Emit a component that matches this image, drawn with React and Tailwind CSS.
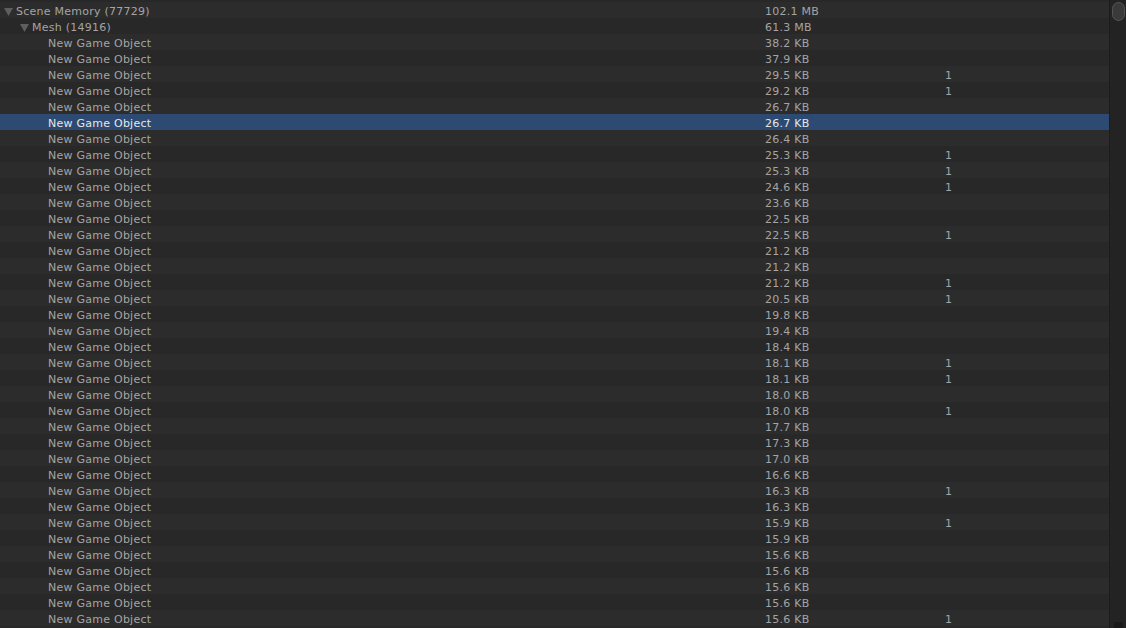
import React from "react";

const data = [
  ["38.2 KB", ""], ["37.9 KB", ""], ["29.5 KB", "1"], ["29.2 KB", "1"], ["26.7 KB", ""],
  ["26.7 KB", "", true], ["26.4 KB", ""], ["25.3 KB", "1"], ["25.3 KB", "1"], ["24.6 KB", "1"],
  ["23.6 KB", ""], ["22.5 KB", ""], ["22.5 KB", "1"], ["21.2 KB", ""], ["21.2 KB", ""],
  ["21.2 KB", "1"], ["20.5 KB", "1"], ["19.8 KB", ""], ["19.4 KB", ""], ["18.4 KB", ""],
  ["18.1 KB", "1"], ["18.1 KB", "1"], ["18.0 KB", ""], ["18.0 KB", "1"], ["17.7 KB", ""],
  ["17.3 KB", ""], ["17.0 KB", ""], ["16.6 KB", ""], ["16.3 KB", "1"], ["16.3 KB", ""],
  ["15.9 KB", "1"], ["15.9 KB", ""], ["15.6 KB", ""], ["15.6 KB", ""], ["15.6 KB", ""],
  ["15.6 KB", ""], ["15.6 KB", "1"],
];

function Tri() {
  return (
    <svg width="9" height="8" viewBox="0 0 9 8" className="shrink-0">
      <polygon points="0,0 9,0 4.5,8" fill="#5e5e5e" />
    </svg>
  );
}

function Row({ idx, indent, tri, name, size, count, selected }) {
  const bg = selected ? "bg-[#2d4b72]" : idx % 2 === 0 ? "bg-[#2c2c2c]" : "bg-[#282828]";
  const color = selected ? "text-[#e6e6e6]" : "text-[#a4a4a4]";
  return (
    <div className={`flex h-[16px] items-center pt-[3px] ${bg} ${color}`}>
      <div className="flex w-[765px] shrink-0 items-center" style={{ paddingLeft: indent }}>
        {tri ? <div className="mr-[3px] flex items-center"><Tri /></div> : null}
        <span className="whitespace-nowrap">{name}</span>
      </div>
      <div className="w-[180px] shrink-0 whitespace-nowrap">{size}</div>
      <div className="whitespace-nowrap">{count}</div>
    </div>
  );
}

export default function App() {
  return (
    <div
      className="flex h-[628px] w-[1126px] overflow-hidden bg-[#282828] text-[11px] leading-[14px] tracking-[0.25px]"
      style={{ fontFamily: '"DejaVu Sans", Verdana, sans-serif' }}
    >
      <div className="flex-1 overflow-hidden pt-[2px]">
        <Row idx={0} indent={4} tri name="Scene Memory (77729)" size="102.1 MB" count="" />
        <Row idx={1} indent={20} tri name="Mesh (14916)" size="61.3 MB" count="" />
        {data.map((d, i) => (
          <Row key={i} idx={i + 2} indent={48} name="New Game Object" size={d[0]} count={d[1]} selected={d[2]} />
        ))}
      </div>
      <div className="relative w-[17px] shrink-0 border-l border-[#1c1c1c] bg-[#232323]">
        <div className="absolute left-[2px] top-[2px] h-[19px] w-[13px] rounded-[7px] border border-[#555] bg-[#3a3a3a]" />
        <div className="absolute bottom-0 left-[4px] h-[6px] w-[9px] bg-[#1a1a1a]" />
      </div>
    </div>
  );
}
